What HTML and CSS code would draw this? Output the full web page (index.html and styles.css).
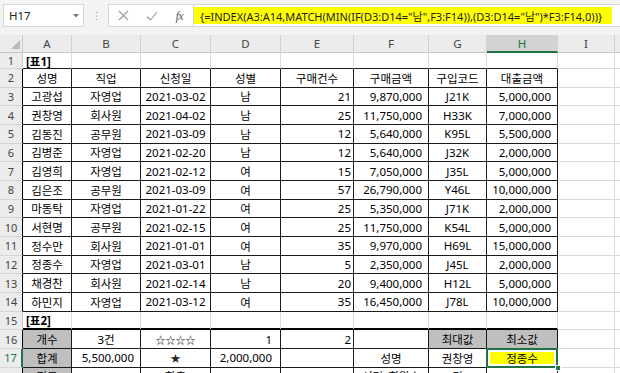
FILE: index.html
```html
<!DOCTYPE html>
<html lang="ko">
<head>
<meta charset="utf-8">
<title>Excel</title>
<link rel="stylesheet" href="styles.css">
</head>
<body>
<div class="fbar">
  <div class="namebox"><span>H17</span><svg class="dd" width="6" height="4" viewBox="0 0 6 4"><path d="M0 0h6L3 3.5z" fill="#7a7a7a"/></svg></div>
  <div class="grip"><svg width="3" height="10" viewBox="0 0 3 10"><rect x="1" y="1" width="1.2" height="1.2" fill="#a8a8a8"/><rect x="1" y="4.5" width="1.2" height="1.2" fill="#a8a8a8"/><rect x="1" y="8" width="1.2" height="1.2" fill="#a8a8a8"/></svg></div>
  <div class="btns">
    <span class="btn"><svg width="11" height="11" viewBox="0 0 11 11"><path d="M1 1l9 9M10 1l-9 9" stroke="#9a9a9a" stroke-width="1.1" fill="none"/></svg></span>
    <span class="btn"><svg width="12" height="10" viewBox="0 0 12 10"><path d="M1 5.5l3.5 3.5L11 1" stroke="#9a9a9a" stroke-width="1.1" fill="none"/></svg></span>
    <span class="btn fx">fx</span>
  </div>
  <div class="formula"><span class="hl">{=INDEX(A3:A14,MATCH(MIN(IF(D3:D14="남",F3:F14)),(D3:D14="남")*F3:F14,0))}</span></div>
</div>
<div class="sheet">
  <div class="corner"><svg width="9" height="9" viewBox="0 0 9 9"><path d="M9 0V9H0z" fill="#b9b9b9"/></svg></div>
  <div class="ch">A</div><div class="ch">B</div><div class="ch">C</div><div class="ch">D</div><div class="ch">E</div><div class="ch">F</div><div class="ch">G</div><div class="ch sel">H</div><div class="ch">I</div><div class="ch"></div>

  <div class="rh">1</div><div class="c kb bold">[표1]</div><div class="c kb"></div><div class="c kb"></div><div class="c kb"></div><div class="c kb"></div><div class="c kb"></div><div class="c kb"></div><div class="c kb"></div><div class="c"></div><div class="c"></div>

  <div class="rh rk">2</div><div class="c k m">성명</div><div class="c k m">직업</div><div class="c k m">신청일</div><div class="c k m">성별</div><div class="c k m">구매건수</div><div class="c k m">구매금액</div><div class="c k m">구입코드</div><div class="c k m">대출금액</div><div class="c"></div><div class="c"></div>

  <div class="rh rk">3</div><div class="c k m">고광섭</div><div class="c k m">자영업</div><div class="c k m">2021-03-02</div><div class="c k m">남</div><div class="c k r p2">21</div><div class="c k r p6">9,870,000</div><div class="c k m">J21K</div><div class="c k r p6">5,000,000</div><div class="c"></div><div class="c"></div>

  <div class="rh rk">4</div><div class="c k m">권창영</div><div class="c k m">회사원</div><div class="c k m">2021-04-02</div><div class="c k m">남</div><div class="c k r p2">25</div><div class="c k r p6">11,750,000</div><div class="c k m">H33K</div><div class="c k r p6">7,000,000</div><div class="c"></div><div class="c"></div>

  <div class="rh rk">5</div><div class="c k m">김동진</div><div class="c k m">공무원</div><div class="c k m">2021-03-09</div><div class="c k m">남</div><div class="c k r p2">12</div><div class="c k r p6">5,640,000</div><div class="c k m">K95L</div><div class="c k r p6">5,500,000</div><div class="c"></div><div class="c"></div>

  <div class="rh rk">6</div><div class="c k m">김병준</div><div class="c k m">자영업</div><div class="c k m">2021-02-20</div><div class="c k m">남</div><div class="c k r p2">12</div><div class="c k r p6">5,640,000</div><div class="c k m">J32K</div><div class="c k r p6">2,000,000</div><div class="c"></div><div class="c"></div>

  <div class="rh rk">7</div><div class="c k m">김영희</div><div class="c k m">자영업</div><div class="c k m">2021-02-12</div><div class="c k m">여</div><div class="c k r p2">15</div><div class="c k r p6">7,050,000</div><div class="c k m">J35L</div><div class="c k r p6">5,000,000</div><div class="c"></div><div class="c"></div>

  <div class="rh rk">8</div><div class="c k m">김은조</div><div class="c k m">공무원</div><div class="c k m">2021-03-09</div><div class="c k m">여</div><div class="c k r p2">57</div><div class="c k r p6">26,790,000</div><div class="c k m">Y46L</div><div class="c k r p6">10,000,000</div><div class="c"></div><div class="c"></div>

  <div class="rh rk">9</div><div class="c k m">마동탁</div><div class="c k m">자영업</div><div class="c k m">2021-01-22</div><div class="c k m">여</div><div class="c k r p2">25</div><div class="c k r p6">5,350,000</div><div class="c k m">J71K</div><div class="c k r p6">2,000,000</div><div class="c"></div><div class="c"></div>

  <div class="rh rk">10</div><div class="c k m">서현명</div><div class="c k m">공무원</div><div class="c k m">2021-02-15</div><div class="c k m">여</div><div class="c k r p2">25</div><div class="c k r p6">11,750,000</div><div class="c k m">K54L</div><div class="c k r p6">5,000,000</div><div class="c"></div><div class="c"></div>

  <div class="rh rk">11</div><div class="c k m">정수만</div><div class="c k m">회사원</div><div class="c k m">2021-01-01</div><div class="c k m">여</div><div class="c k r p2">35</div><div class="c k r p6">9,970,000</div><div class="c k m">H69L</div><div class="c k r p6">15,000,000</div><div class="c"></div><div class="c"></div>

  <div class="rh rk">12</div><div class="c k m">정종수</div><div class="c k m">자영업</div><div class="c k m">2021-03-01</div><div class="c k m">남</div><div class="c k r p2">5</div><div class="c k r p6">2,350,000</div><div class="c k m">J45L</div><div class="c k r p6">2,000,000</div><div class="c"></div><div class="c"></div>

  <div class="rh rk">13</div><div class="c k m">채경찬</div><div class="c k m">회사원</div><div class="c k m">2021-02-14</div><div class="c k m">남</div><div class="c k r p2">20</div><div class="c k r p6">9,400,000</div><div class="c k m">H12L</div><div class="c k r p6">5,000,000</div><div class="c"></div><div class="c"></div>

  <div class="rh rk">14</div><div class="c k m">하민지</div><div class="c k m">자영업</div><div class="c k m">2021-03-12</div><div class="c k m">여</div><div class="c k r p2">35</div><div class="c k r p6">16,450,000</div><div class="c k m">J78L</div><div class="c k r p6">10,000,000</div><div class="c"></div><div class="c"></div>

  <div class="rh">15</div><div class="c kb2 bold">[표2]</div><div class="c kb2"></div><div class="c kb2"></div><div class="c kb2"></div><div class="c kb2"></div><div class="c kb2"></div><div class="c kb2"></div><div class="c kb2"></div><div class="c"></div><div class="c"></div>

  <div class="rh rk">16</div><div class="c k m g">개수</div><div class="c k m">3건</div><div class="c k m star">☆☆☆☆</div><div class="c k r p8">1</div><div class="c k r p2">2</div><div class="c k"></div><div class="c k m g">최대값</div><div class="c k m g">최소값</div><div class="c"></div><div class="c"></div>

  <div class="rh rsel">17</div><div class="c k m g">합계</div><div class="c k r p6">5,500,000</div><div class="c k m star">★</div><div class="c k r p8">2,000,000</div><div class="c k"></div><div class="c k m">성명</div><div class="c k m">권창영</div><div class="c k m yel active">정종수<span class="frame"></span><span class="handle"></span></div><div class="c"></div><div class="c"></div>

  <div class="rh rk">18</div><div class="c k m g">평균</div><div class="c k"></div><div class="c k m">하층</div><div class="c k"></div><div class="c k"></div><div class="c k m">성명_회원수</div><div class="c k m">김</div><div class="c k"></div><div class="c"></div><div class="c"></div>
</div>
</body>
</html>
```

FILE: styles.css
```css
* { box-sizing: border-box; }
html, body { margin: 0; padding: 0; }
body {
  width: 620px;
  height: 373px;
  overflow: hidden;
  background: #fff;
  font-family: "Noto Sans", "Noto Sans CJK KR", sans-serif;
  color: #000;
}

/* formula bar */
.fbar {
  height: 35px;
  background: #f3f3f3;
  display: flex;
  align-items: flex-start;
  padding: 4px 0 0 3px;
}
.namebox {
  width: 81px;
  height: 23px;
  background: #fff;
  border: 1px solid #d6d6d6;
  display: flex;
  align-items: center;
  justify-content: space-between;
  padding: 0 4px 0 5px;
  font-size: 11.5px;
  color: #222;
}
.grip {
  width: 24px;
  height: 23px;
  display: flex;
  align-items: center;
  justify-content: center;
}
.btns {
  width: 86px;
  height: 23px;
  background: #fff;
  border: 1px solid #d6d6d6;
  display: flex;
  align-items: center;
  padding-left: 1px;
}
.btn {
  width: 28px;
  display: flex;
  justify-content: center;
  align-items: center;
}
.fx {
  font-family: "Liberation Serif", serif;
  font-style: italic;
  font-size: 13px;
  color: #666;
  letter-spacing: -1px;
}
.formula {
  flex: 1;
  height: 23px;
  background: #fff;
  border: 1px solid #d6d6d6;
  border-left: none;
  border-right: none;
  display: flex;
  align-items: center;
}
.hl {
  width: 418px;
  height: 17px;
  background: #ffff00;
  display: flex;
  align-items: center;
  padding-left: 6px;
  font-size: 11px;
  color: #222;
  white-space: nowrap;
  overflow: hidden;
}

/* sheet grid */
.sheet {
  display: grid;
  grid-template-columns: 23px 49px 69px 70px 70px 73px 75px 58px 71px 57px 1fr;
  grid-template-rows: 18px 16px repeat(17, 18.67px);
}
.corner {
  background: #ececec;
  border-right: 1px solid #c8c8c8;
  border-bottom: 1px solid #c8c8c8;
  display: flex;
  align-items: flex-end;
  justify-content: flex-end;
  padding: 0 2px 3px 0;
}
.ch {
  background: #ececec;
  border-right: 1px solid #d2d2d2;
  border-bottom: 1px solid #c8c8c8;
  display: flex;
  align-items: center;
  justify-content: center;
  font-size: 11.5px;
  color: #444;
}
.ch.sel {
  background: #d3d3d3;
  color: #217346;
  border-bottom: 2px solid #217346;
}
.rh {
  background: #ececec;
  border-right: 1px solid #c8c8c8;
  border-bottom: 1px solid #d4d4d4;
  display: flex;
  align-items: center;
  justify-content: center;
  font-size: 11px;
  color: #444;
}
.rh.rk { border-right-color: #000; }
.rh.rsel {
  color: #217346;
  border-right: 2px solid #217346;
}
.c {
  border-right: 1px solid #dadada;
  border-bottom: 1px solid #dadada;
  display: flex;
  align-items: center;
  padding: 0 3px;
  font-size: 11.5px;
  white-space: nowrap;
  overflow: hidden;
}
.m { justify-content: center; }
.r { justify-content: flex-end; }
.p2 { padding-right: 2px; }
.p6 { padding-right: 6px; }
.p8 { padding-right: 8px; }
.bold { font-weight: 700; }
.k { border-right-color: #1a1a1a; border-bottom-color: #1a1a1a; }
.kb { border-bottom-color: #1a1a1a; }
.kb2 { border-bottom: 2px solid #000; }
.g { background: #bfbfbf; }
.star { font-family: "Noto Sans CJK KR", "DejaVu Sans", sans-serif; font-size: 10px; color: #222; }
.yel { background: #ffff00; }
.active { position: relative; overflow: visible; }
.frame {
  position: absolute;
  left: -1px;
  top: -1px;
  right: -1px;
  bottom: -1px;
  border: 2px solid #217346;
  box-shadow: inset 0 0 0 2px #fff;
}
.handle {
  position: absolute;
  right: -4px;
  bottom: -4px;
  width: 6px;
  height: 6px;
  background: #217346;
  border: 1px solid #fff;
}
```
